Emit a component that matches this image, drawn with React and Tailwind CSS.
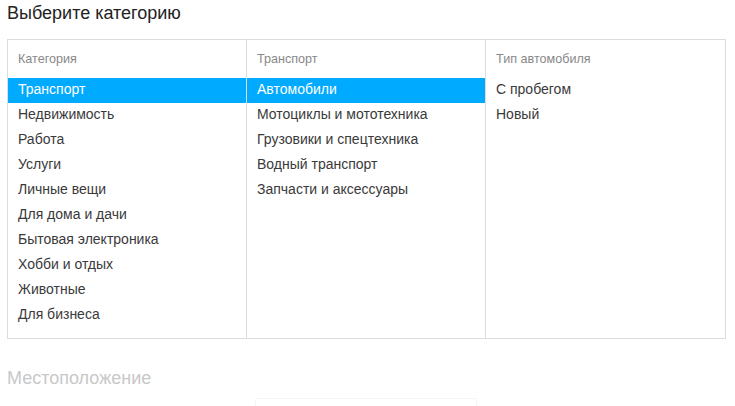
import React, { useState } from 'react';

const categories = [
  'Транспорт',
  'Недвижимость',
  'Работа',
  'Услуги',
  'Личные вещи',
  'Для дома и дачи',
  'Бытовая электроника',
  'Хобби и отдых',
  'Животные',
  'Для бизнеса',
];

const transport = [
  'Автомобили',
  'Мотоциклы и мототехника',
  'Грузовики и спецтехника',
  'Водный транспорт',
  'Запчасти и аксессуары',
];

const carTypes = ['С пробегом', 'Новый'];

const Column = ({ title, items, selected, onSelect, last }) => (
  <div className={`w-[239px] shrink-0 ${last ? '' : 'border-r border-[#dcdcdc]'}`}>
    <div className="h-[38px] pl-[10px] pt-[12px] text-[12.6px] leading-[15px] text-[#888]">{title}</div>
    <ul>
      {items.map((item) => (
        <li
          key={item}
          onClick={() => onSelect && onSelect(item)}
          className={`h-[25px] pl-[10px] text-[14px] leading-[23px] cursor-pointer ${
            item === selected ? 'bg-[#00aaff] text-white' : 'text-[#3a3a3a]'
          }`}
        >
          {item}
        </li>
      ))}
    </ul>
  </div>
);

const App = () => {
  const [category, setCategory] = useState('Транспорт');
  const [sub, setSub] = useState('Автомобили');
  const [type, setType] = useState(null);

  return (
    <div className="h-[406px] overflow-hidden bg-white px-[7px] font-['Liberation_Sans',Arial,sans-serif]">
      <h1 className="pt-[2px] text-[18px] leading-[22px] text-[#222]">Выберите категорию</h1>

      <div className="mt-[15px] flex h-[300px] w-[719px] border border-[#dcdcdc]">
        <Column title="Категория" items={categories} selected={category} onSelect={setCategory} />
        <Column title="Транспорт" items={transport} selected={sub} onSelect={setSub} />
        <Column title="Тип автомобиля" items={carTypes} selected={type} onSelect={setType} last />
      </div>

      <h2 className="mt-[29px] text-[18px] leading-[20px] text-[#c8c8c8]">Местоположение</h2>
      <div className="ml-[248px] mt-[10px] h-[10px] w-[222px] rounded-t-[2px] border border-b-0 border-[#f5f5f5]" />
    </div>
  );
};

export default App;
